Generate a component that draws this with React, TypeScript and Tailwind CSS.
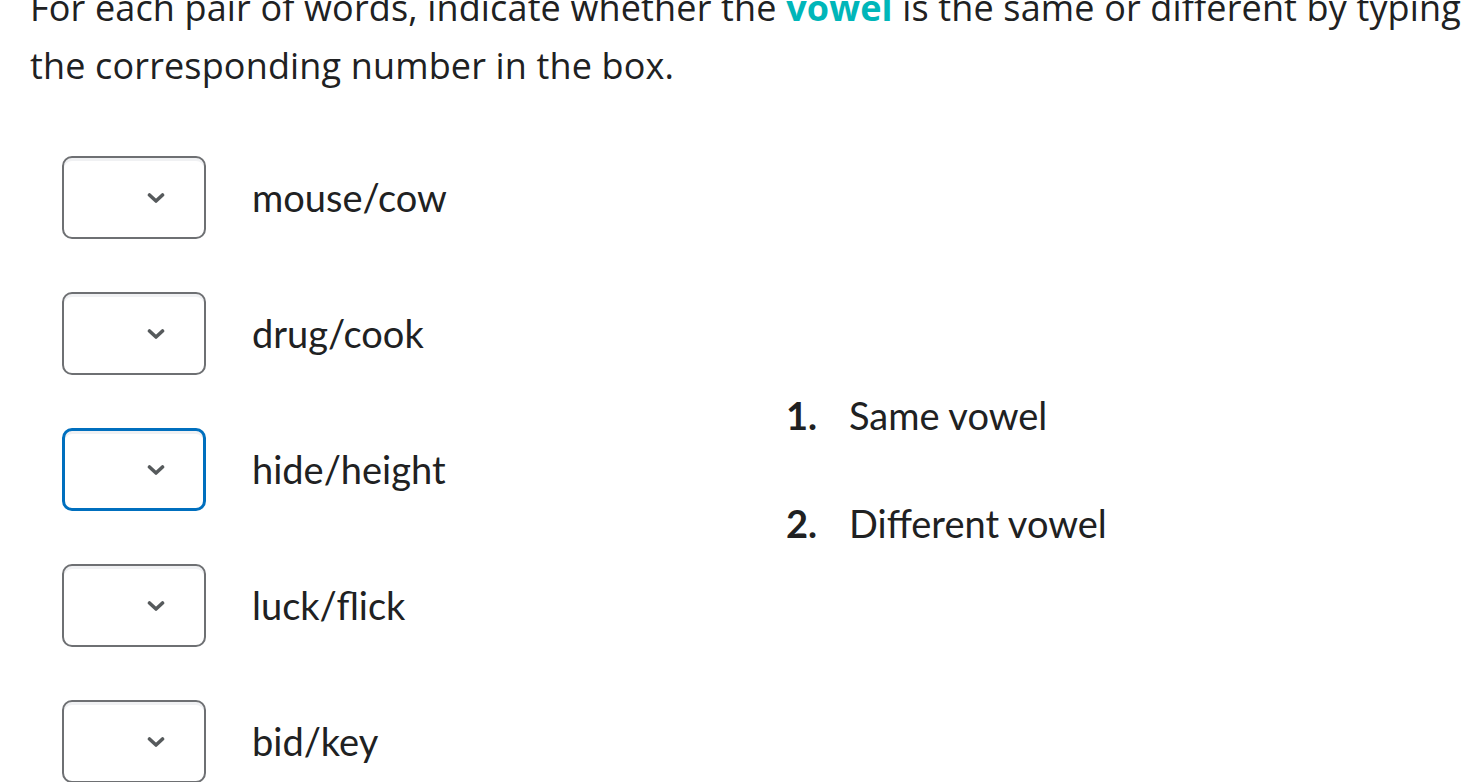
import React from "react";

const rows = ["mouse/cow", "drug/cook", "hide/height", "luck/flick", "bid/key"];

function Chevron() {
  return (
    <svg width="18" height="12" viewBox="0 0 18 12" fill="none">
      <path d="M2.5 3 L9 9 L15.5 3" stroke="#565a5c" strokeWidth="3.6" strokeLinecap="round" strokeLinejoin="round" />
    </svg>
  );
}

function SelectBox({ focused }: { focused?: boolean }) {
  return (
    <div
      className={
        focused
          ? "w-[144px] h-[83px] rounded-[10px] border-[3px] border-[#006fbe] bg-white shadow-[inset_0_3px_0_#f0f1f3] flex items-center justify-end pr-[38px] shrink-0"
          : "w-[144px] h-[83px] rounded-[10px] border-2 border-[#6e7073] bg-white shadow-[inset_0_3px_0_#f0f1f3] flex items-center justify-end pr-[39px] shrink-0"
      }
    >
      <Chevron />
    </div>
  );
}

export default function App() {
  return (
    <div className="w-[1474px] h-[782px] overflow-hidden bg-white text-[#202122]" style={{ fontFamily: "Lato, 'Open Sans', sans-serif" }}>
      <p
        className="mt-[-21px] pl-[30px] pr-[8px] text-[36px] leading-[58px] whitespace-nowrap tracking-[0.15px]"
        style={{ fontFamily: "'Open Sans', sans-serif" }}
      >
        For each pair of words, indicate whether the{" "}
        <span className="font-bold text-[#00b6b9]">vowel</span> is the same or different by typing
        <br />
        the corresponding number in the box.
      </p>
      <div className="flex items-center mt-[61px] pl-[62px]">
        <div className="flex flex-col gap-[53px] w-[724px]">
          {rows.map((r, i) => (
            <div key={r} className="flex items-center gap-[46px]">
              <SelectBox focused={i === 2} />
              <span className="text-[38px]">{r}</span>
            </div>
          ))}
        </div>
        <div className="flex flex-col gap-[51px] text-[38px]">
          <div className="flex items-center">
            <span className="w-[63px] font-bold">1.</span>
            <span>Same vowel</span>
          </div>
          <div className="flex items-center">
            <span className="w-[63px] font-bold">2.</span>
            <span>Different vowel</span>
          </div>
        </div>
      </div>
    </div>
  );
}
